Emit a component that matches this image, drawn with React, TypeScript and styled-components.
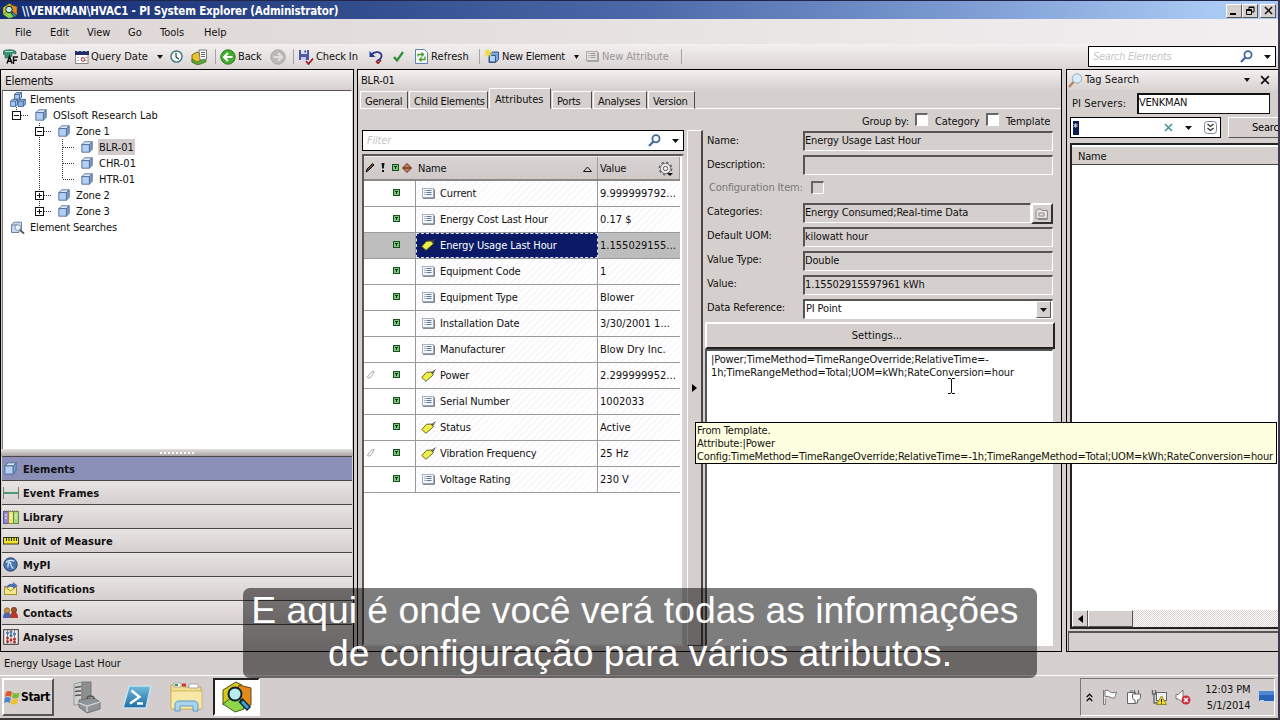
import React from 'react';
import styled, { createGlobalStyle, css } from 'styled-components';

const GlobalStyle = createGlobalStyle`
  html, body { margin: 0; padding: 0; }
  body {
    width: 1280px; height: 720px; overflow: hidden; background: #d4cfcd;
    font-family: "DejaVu Sans Condensed", "DejaVu Sans", sans-serif;
    font-stretch: condensed;
    font-size: 11px; letter-spacing: -0.2px; line-height: 14px; color: #111;
  }
  * { box-sizing: border-box; }
  svg { display: block; flex: none; }
`;

const face = '#d5cfcd';
const raised = css`border: 1px solid; border-color: #fff #5a5555 #5a5555 #fff;`;

/* ---------- window frame ---------- */
const Screen = styled.div`
  position: relative; width: 1280px; height: 720px; overflow: hidden;
  display: flex; flex-direction: column; background: ${face};
  border-right: 2px solid #3d3950; white-space: nowrap;
`;
const TitleBar = styled.header`
  height: 19px; flex: none; display: flex; align-items: center; padding: 1px 0 0 2px; gap: 3px;
  border-top: 1px solid #22254a;
  background: linear-gradient(90deg, #152d74 0%, #2b4687 22%, #4b69a8 50%, #7b9bd2 75%, #a9caf3 95%);
  color: #fff; font-weight: bold;
`;
const TitleText = styled.span`flex: 1; font-size: 11.5px; letter-spacing: -0.17px; padding-left: 1px;`;
const CaptionButton = styled.button<{ $gap?: boolean }>`
  width: 16px; height: 14px; padding: 0; background: ${face}; ${raised}
  display: flex; align-items: center; justify-content: center; margin-left: ${p => (p.$gap ? 2 : 0)}px;
`;
const CaptionButtons = styled.div`display: flex; padding-right: 2px;`;
const MenuBar = styled.nav`
  height: 25px; flex: none; display: flex; align-items: center; padding-left: 15px;
  background: linear-gradient(90deg, #dcd6d4, #ece8e8 70%, #f3eef0);
`;
const MenuItem = styled.span<{ $w: number }>`width: ${p => p.$w}px; padding-top: 2px; letter-spacing: 0;`;
const ToolBar = styled.div`
  height: 25px; flex: none; display: flex; align-items: center; padding-left: 3px;
  background: linear-gradient(#f4f0f0, #ded9d8 85%, #d9d3d2);
`;
const ToolItem = styled.span<{ $w: number; $off?: boolean; $gap?: number; $ls?: number }>`
  width: ${p => p.$w}px; display: flex; align-items: center; gap: ${p => p.$gap ?? 2}px; flex: none;
  color: ${p => (p.$off ? '#9b9696' : '#111')}; letter-spacing: ${p => p.$ls ?? -0.12}px;
`;
const Divider = styled.i`width: 1px; height: 15px; background: #a8a3a3; margin-right: 4px; flex: none;`;
const Grow = styled.span`flex: 1;`;
const Space = styled.span<{ $w: number }>`width: ${p => p.$w}px; flex: none;`;
const SearchInput = styled.div<{ $h: number }>`
  height: ${p => p.$h}px; border: 1px solid #000; background: #fff; display: flex; align-items: center;
  padding: 0 4px; color: #c6c6c6; font-style: italic; flex: none;
`;
const GlobalSearch = styled(SearchInput)`width: 188px; margin-right: 2px; letter-spacing: -0.35px;`;

const Main = styled.main`height: 583px; flex: none; display: flex; gap: 3px;`;
const Pane = styled.section<{ $w: number }>`
  width: ${p => p.$w}px; flex: none; display: flex; flex-direction: column; overflow: hidden;
  border: 1px solid #000; background: ${face};
`;
const PaneTitle = styled.h2`
  margin: 0; height: 20px; flex: none; font: inherit; padding: 4px 0 0 3px; background: linear-gradient(#f4efef, #d5cfcd);
`;

/* ---------- element tree ---------- */
const TreeTitle = styled(PaneTitle)`font-size: 12px; padding-left: 4px; letter-spacing: -0.3px;`;
const Tree = styled.div`
  height: 359px; flex: none; margin: 0 1px; padding: 0 0 0 3px; background: #fefefe;
  border-top: 1px solid #555; border-left: 1px solid #777; border-right: 1px solid #fff;
`;
const TreeRow = styled.div`height: 16px; display: flex; align-items: center;`;
const NodeIcon = styled.span<{ $root?: boolean }>`width: 24px; flex: none; padding-left: ${p => (p.$root ? 4 : 6)}px;`;
const NodeLabel = styled.span<{ $sel?: boolean; $wide?: boolean }>`
  height: 16px; padding: 2px 1px 0; margin-left: -1px; letter-spacing: ${p => (p.$wide ? 0 : -0.15)}px;
  background: ${p => (p.$sel ? '#d1cccb' : 'none')};
`;
const Splitter = styled.div`
  height: 7px; flex: none; display: flex; justify-content: center; align-items: center; gap: 2px;
  background: linear-gradient(#e4e0df, #aaa5a3);
`;
const Grip = styled.i`width: 2px; height: 2px; background: #fff;`;
const NavItem = styled.div<{ $active?: boolean }>`
  height: 24px; flex: none; display: flex; align-items: center; margin: 0 1px; gap: 4px;
  border-top: 1px solid #4a4646; font-weight: bold; letter-spacing: 0.05px;
  background: ${p => (p.$active ? '#8a90b8' : 'linear-gradient(#e9e4e4, #d5cfcf)')};
`;
const NavText = styled.span`padding-top: 2px;`;
const NavIcon = styled.span`width: 17px; display: flex; justify-content: center;`;

/* ---------- attribute pane ---------- */
const Tabs = styled.div`
  height: 19px; flex: none; display: flex; align-items: flex-end; padding-left: 2px; background: ${face};
`;
const Tab = styled.span<{ $w: number; $active?: boolean }>`
  width: ${p => p.$w}px; height: ${p => (p.$active ? 21 : 18)}px; margin-right: 1px; padding-left: 4px; flex: none;
  border: 1px solid; border-color: #fff #4c4848 ${p => (p.$active ? face : '#fff')} #fff;
  background: ${face}; padding-top: ${p => (p.$active ? 4 : 3)}px; letter-spacing: -0.25px;
  ${p => p.$active && css`padding-left: 5px; letter-spacing: -0.05px;`}
`;
const TabsRest = styled.i`flex: 1; height: 1px; background: #fff;`;
const TabPage = styled.div`flex: 1; display: flex; flex-direction: column; padding: 0 7px 5px 4px;`;
const GroupBy = styled.div`height: 20px; flex: none; display: flex; align-items: center; padding-left: 500px;`;
const GroupLabel = styled.span<{ $w: number; $indent?: number }>`
  width: ${p => p.$w}px; padding: 5px 0 0 ${p => p.$indent ?? 0}px; letter-spacing: -0.1px; flex: none;
`;
const Check = styled.i<{ $off?: boolean }>`
  width: 13px; height: 13px; flex: none; background: ${p => (p.$off ? face : '#fff')};
  border: 2px solid; border-width: 2px 1px 1px 2px; border-color: #666 #fff #fff #666;
`;
const Columns = styled.div`flex: 1; display: flex; min-height: 0;`;
const ListColumn = styled.div`width: 322px; flex: none; display: flex; flex-direction: column; gap: 3px; padding-top: 1px;`;
const FilterBox = styled(SearchInput)`width: 322px;`;
const Grid = styled.div`
  flex: 1; background: #fefefe; border: 2px solid; border-color: #5c5858 #d8d4d4 #eee #5c5858; padding-right: 2px;
`;
const rowColumns = css`display: grid; grid-template-columns: 52px 182px 1fr;`;
const GridHead = styled.div`
  ${rowColumns} height: 25px; background: linear-gradient(#d9d3d3, #cfc9c8); border-bottom: 2px solid #8b8786; border-top: 1px solid #eee;
`;
const HeadCell = styled.span`
  display: flex; align-items: center; justify-content: space-between; padding: 1px 5px 0 2px; border-right: 1px solid #a19c9c;
`;
const HeadIcons = styled.span`display: flex; align-items: center; gap: 3px; padding: 0 0 1px 1px;`;
const hatch = 'repeating-linear-gradient(135deg, #fff 0 3px, #faf8fa 3px 5px)';
const GridRow = styled.div<{ $sel?: boolean }>`
  ${rowColumns} height: 26px; border-bottom: 1px solid #9c9999;
  background: ${p => (p.$sel ? '#bebebe' : '#fff')};
`;
const FlagCell = styled.span`display: grid; grid-template-columns: 29px 1fr; align-items: center; padding-bottom: 3px; border-right: 1px solid #999;`;
const NameCell = styled.span<{ $sel?: boolean }>`
  display: flex; align-items: center; padding: 1px 0 0 5px; border-right: 1px solid #999; letter-spacing: -0.12px;
  background: ${p => (p.$sel ? '#0a1a66' : hatch)}; color: ${p => (p.$sel ? '#fff' : '#111')};
  ${p => p.$sel && css`border: 1px dashed #dfe3ff; padding: 0 0 0 4px;`}
`;
const KindIcon = styled.span`width: 19px; flex: none; display: flex; padding-bottom: 2px;`;
const ValueCell = styled.span<{ $sel?: boolean }>`
  padding: 6px 0 0 2px; overflow: hidden; background: ${p => (p.$sel ? '#bdbdbd' : hatch)}; letter-spacing: 0.02px;
`;
const SplitBar = styled.div`
  width: 16px; margin: 1px 0 0 3px; flex: none; display: flex; align-items: center; padding-left: 4px;
  border: 1px solid; border-width: 1px 2px 1px 1px; border-color: #fff #4c4848 #4c4848 #fff; background: ${face};
`;

/* ---------- attribute details ---------- */
const Details = styled.div`width: 350px; margin-left: 2px; flex: none; display: flex; flex-direction: column;`;
const FieldRow = styled.label`
  height: 24px; flex: none; display: grid; grid-template-columns: 96px 1fr; align-items: center; padding-left: 2px;
`;
const OffRow = styled(FieldRow)`grid-template-columns: 102px 1fr; padding: 0 0 3px 4px; color: #777;`;
const FieldName = styled.span<{ $lift?: boolean }>`letter-spacing: -0.12px; padding-bottom: ${p => (p.$lift ? 3 : 0)}px;`;
const FieldBox = styled.span`height: 20px; display: flex; width: 250px;`;
const ReadField = styled.span<{ $edit?: boolean }>`
  flex: 1; border: solid; border-width: 2px 1px 1px 2px; border-color: #555 #fff #fff #555; padding: 1px 0 0;
  background: ${p => (p.$edit ? '#fff' : face)}; display: flex; justify-content: space-between; letter-spacing: -0.15px;
  ${p => p.$edit && css`padding: 0 1px;`}
`;
const ComboText = styled.span`padding: 1px 0 0 0;`;
const SmallButton = styled.button`
  width: 22px; height: 21px; padding: 0; background: ${face}; border: 2px solid; border-color: #fff #333 #333 #fff;
  display: flex; align-items: center; justify-content: center;
`;
const DropButton = styled.span`
  width: 15px; height: 17px; ${raised} background: ${face}; display: flex; align-items: center; justify-content: center;
`;
const SettingsButton = styled.button`
  height: 27px; flex: none; margin-top: 1px; font: inherit; letter-spacing: 0.05px; color: inherit; padding: 1px 6px 0 0;
  background: ${face}; border: 2px solid; border-color: #fff #222 #222 #fff; width: 350px;
`;
const ConfigText = styled.p`
  margin: 0 2px 0 0; flex: 1; padding: 2px 4px; background: #fefefe; line-height: 13px; white-space: pre;
  border: solid; border-width: 2px 1px 1px 2px; border-color: #555 #fff #fff #555; letter-spacing: -0.12px;
`;

/* ---------- tag search ---------- */
const TagHeader = styled.div`height: 20px; flex: none; display: flex; align-items: center; padding: 0 8px 0 1px; letter-spacing: 0.04px; background: linear-gradient(#f4efef, #d9d3d1);`;
const TagPane = styled(Pane)`border-right: 0; margin-left: 1px;`;
const ServerRow = styled.div`height: 27px; flex: none; display: flex; align-items: center; padding-left: 5px;`;
const ServerLabel = styled.span`width: 65px; letter-spacing: 0.1px;`;
const ServerInput = styled.span`width: 133px; height: 21px; border: 1px solid #111; border-width: 2px 1px 1px 2px; background: #fff; padding: 1px 0 0;`;
const TagRow = styled.div`height: 21px; flex: none; display: flex; gap: 7px; padding-left: 3px;`;
const TagInput = styled(SearchInput)`width: 151px; font-style: normal; padding: 0 3px 0 2px; gap: 12px;`;
const Selected = styled.span`background: #0c1c54; color: #fff; width: 6px; height: 14px;`;
const SearchButton = styled.button`
  width: 70px; padding: 0 0 0 23px; text-align: left; font: inherit; letter-spacing: inherit; background: ${face}; ${raised} flex: none;
`;
const TagList = styled.div`
  height: 486px; flex: none; margin: 5px 0 0 3px; display: flex; flex-direction: column; background: #fefefe;
  border: 2px solid #222; border-right: 0;
`;
const TagHead = styled.div`height: 19px; flex: none; margin-top: 1px; padding: 3px 0 0 6px; background: ${face}; border-bottom: 1px solid #444; border-top: 1px solid #fff;`;
const ScrollBar = styled.div`
  height: 17px; flex: none; display: flex; background: repeating-conic-gradient(#fff 0 25%, #d8d2d0 0 50%) 0 0 / 2px 2px;
`;
const ScrollPart = styled.i<{ $w: number }>`
  width: ${p => p.$w}px; ${raised} background: ${face}; display: flex; align-items: center; justify-content: center;
`;
const TagStatus = styled.div`flex: 1; margin: 2px 0 0 1px; border-top: 2px solid #555; border-left: 1px solid #555; background: ${face};`;

/* ---------- bottom bars ---------- */
const StatusBar = styled.footer`height: 24px; flex: none; padding: 5px 0 0 4px; letter-spacing: -0.12px; border-bottom: 1px solid #fff;`;
const TaskBar = styled.div`
  height: 42px; flex: none; display: flex; align-items: center; padding: 0 3px 0 2px; background: #d3cdcd;
`;
const BottomEdge = styled.div`height: 2px; background: #3a3636;`;
const StartButton = styled.button`
  width: 52px; height: 38px; padding: 0; display: flex; align-items: center; font: inherit; font-weight: bold; font-size: 12px;
  letter-spacing: -0.4px; background: ${face}; border: 2px solid; border-color: #fff #555 #555 #fff; flex: none;
`;
const TaskSlot = styled.span<{ $active?: boolean; $w: number }>`
  width: ${p => p.$w}px; height: 38px; flex: none; display: flex; align-items: center; justify-content: center;
  ${p => p.$active && css`background: #fff; border: 2px solid; border-color: #222 #fff #fff #222;`}
`;
const Tray = styled.div`
  width: 195px; height: 38px; border: 1px solid; border-color: #777 #fff #fff #777; display: flex; align-items: center;
  padding: 0 0 0 5px; gap: 8.5px;
`;
const Clock = styled.div`width: 48px; text-align: right; line-height: 16px; margin-left: 3px; letter-spacing: -0.1px; padding-top: 1px;`;

/* ---------- overlays ---------- */
const Tooltip = styled.div`
  position: absolute; left: 695px; top: 422px; width: 582px; height: 42px; padding: 1px; line-height: 13px; white-space: pre;
  background: #fdffe0; border: 1px solid #000; letter-spacing: -0.152px;
`;
const Cursor = styled.span`position: absolute; left: 947px; top: 378px;`;
const Caption = styled.div`
  position: absolute; left: 243px; top: 588px; width: 794px; height: 90px; border-radius: 7px; padding-top: 1px;
  background: rgba(8, 6, 6, 0.52); color: #fff; text-align: center;
  font: 37.3px/43px "Liberation Sans", sans-serif; letter-spacing: 0;
`;

/* ---------- icons ---------- */
const Down = ({ s = 7 }: { s?: number }) => (
  <svg width={s} height={4} viewBox="0 0 8 4" preserveAspectRatio="none"><path d="M0 0h8L4 4z" fill="#111" /></svg>
);
const Magnifier = () => (
  <svg width="13" height="13" viewBox="0 0 13 13" fill="none">
    <circle cx="8" cy="4.8" r="3.6" stroke="#4369a0" strokeWidth="1.8" /><path d="M5.4 7.4 1 12" stroke="#4369a0" strokeWidth="2.2" />
  </svg>
);
const Cube = ({ s = 12 }: { s?: number }) => (
  <svg width={s} height={s} viewBox="0 0 12 12" stroke="#4f6c96" strokeWidth=".9" strokeLinejoin="round">
    <path d="M.8 3.6 3.8.8h7.4L8.4 3.6z" fill="#dce9fa" /><path d="m8.4 3.6 2.8-2.8v7.4l-2.8 3z" fill="#7d9cc9" />
    <rect x=".8" y="3.6" width="7.6" height="7.6" fill="#b4cff4" />
  </svg>
);
const Cubes = () => (
  <svg width="16" height="15" viewBox="0 0 16 15" stroke="#42628f" strokeWidth=".9" strokeLinejoin="round">
    <path d="M4.5 2.5 6.5.6h5v4.6l-2 2h-5z" fill="#a9c8f3" /><path d="M4.5 2.5h5v4.7M9.5 2.5l2-1.9" fill="none" />
    <path d="M.6 9.2 2.5 7.3h5v5L5.6 14.4h-5z" fill="#a9c8f3" /><path d="M.6 9.2h5v5.2M5.6 9.2l1.9-1.9" fill="none" />
    <path d="M8 9.2 10 7.3h5.3v5L13.3 14.4H8z" fill="#8fb3e6" /><path d="M8 9.2h5.3v5.2M13.3 9.2l2-1.9" fill="none" />
  </svg>
);
const SearchCube = () => (
  <svg width="15" height="13" viewBox="0 0 15 13" fill="none">
    <path d="M1.5 4 4 1.2h7.5v8H9v2.3H1.5z" fill="#c9d8ea" stroke="#6b84a4" /><path d="M1.5 4h6" stroke="#6b84a4" /><circle cx="7.8" cy="6.6" r="2.8" fill="#eaf5fb" stroke="#7f9db0" /><path d="m10 9 4 3.6" stroke="#555" strokeWidth="1.8" />
  </svg>
);
const Guide = ({ up, down, arm, box }: { up?: boolean; down?: boolean; arm?: boolean; box?: '+' | '-' }) => (
  <svg width="23" height="16" viewBox="0 0 23 16" shapeRendering="crispEdges" stroke="#333" fill="none">
    <g strokeDasharray="1 1">
      {up && <path d="M10.5 0v8" />}{down && <path d="M10.5 8v8" />}{arm && <path d="M11 8.5h12" />}
    </g>
    {box && <><rect x="6.5" y="4.5" width="8" height="8" fill="#fff" stroke="#111" /><path d={box === '-' ? 'M8 8.5h5' : 'M8 8.5h5M10.5 6v5'} stroke="#111" /></>}
  </svg>
);
const PiLogo = ({ s }: { s: number }) => (
  <svg width={s} height={s} viewBox="0 0 32 32">
    <path d="M2 9 15 1l6 3-9 13-10 7z" fill="#d3c71c" stroke="#554f10" /><path d="m18 4 12 3v17l-9 4-6-12z" fill="#e08a1a" stroke="#6b4210" />
    <path d="m2 23 9-7 10 3 2 9-9 3z" fill="#8fd44b" stroke="#39651c" />
    <circle cx="14" cy="13" r="6.5" fill="#b8ecf0" stroke="#123" strokeWidth="2" /><path d="m19.5 19 8.5 9" stroke="#123" strokeWidth="5.5" /><path d="m21 20.5 6 6.5" stroke="#35a5d8" strokeWidth="3" />
  </svg>
);
const Doc = ({ off }: { off?: boolean }) => (
  <svg width="13" height="11" viewBox="0 0 13 11">
    <rect x=".5" y=".5" width="11" height="9" fill={off ? '#e4e0e0' : '#f3f7fc'} stroke={off ? '#b0abab' : '#a9b3c0'} />
    <path d="M1 10.3h11.4V1.5" fill="none" stroke={off ? '#999' : '#66707e'} />
    <path d="M2.5 2.5h1M4.5 2.5h5M2.5 4.5h1M4.5 4.5h5M2.5 6.5h1M4.5 6.5h5" stroke={off ? '#999' : '#5f7697'} />
  </svg>
);
const TagIcon = () => (
  <svg width="15" height="13" viewBox="0 0 15 13">
    <path d="M.8 8.5 5.5 3.3l5.500-.3 1.4 2.8-7.400 6.500z" fill="#eeee48" stroke="#5e5c12" strokeWidth=".9" /><path d="m10 4 4.500-3.300M11 5l2.600-2.400" stroke="#444" fill="none" />
  </svg>
);
const Template = () => (
  <svg width="7" height="7" viewBox="0 0 7 7" shapeRendering="crispEdges"><rect x=".5" y=".5" width="6" height="6" fill="#7cc47e" stroke="#17521d" /><path d="M2 2.500h3M3.500 2.500V5" stroke="#103512" /></svg>
);
const Clip = () => (
  <svg width="11" height="9" viewBox="0 0 11 9" fill="none" stroke="#aaa"><path d="M3 7.500 7 2.500l3-1.500-1 3-3 4-2.500-.3" /></svg>
);
const Pencil = () => (
  <svg width="10" height="11" viewBox="0 0 10 11"><path d="M1 10 2 7 7.500 1.500l1.500 1.500L3.500 8.500z" fill="#6b4a3a" stroke="#111" /></svg>
);
const Bang = () => (
  <svg width="8" height="11" viewBox="0 0 8 11"><path d="M3.500 1h3l-.7 5.500H4.200zM4 8h2v2H4z" fill="#111" /></svg>
);
const Diamond = () => (
  <svg width="10" height="10" viewBox="0 0 10 10"><path d="m5 .5 4.500 4.500L5 9.500.5 5z" fill="#c87a55" stroke="#6b2c18" /><path d="M1 5h8" stroke="#4d1e12" /></svg>
);
const Gear = () => (
  <svg width="16" height="16" viewBox="0 0 16 16" fill="none" stroke="#555">
    <circle cx="7.500" cy="7.500" r="6" stroke="#666" strokeDasharray="2.400 2.300" strokeWidth="1.800" /><circle cx="7.500" cy="7.500" r="5" fill="#f4f2f2" stroke="#777" /><circle cx="7.500" cy="7.500" r="2.200" /><path d="M9 12h6l-3 3z" fill="#111" stroke="none" />
  </svg>
);
const DatabaseIcon = () => (
  <svg width="15" height="15" viewBox="0 0 15 15">
    <path d="M0 3c0-3 13-3 13 0v2L9 4v3L6 9H2V6L0 5z" fill="#3a9277" stroke="#24614e" strokeWidth=".6" /><path d="M2 2.500h8" stroke="#a8ddc8" />
    <path d="m4 14.500 2.500-7L9 14.500M5 12.300h3M10.500 15V8H15M10.500 11.300h3.500" fill="none" stroke="#111" strokeWidth="1.500" />
  </svg>
);
const CalendarIcon = () => (
  <svg width="14" height="14" viewBox="0 0 14 14">
    <rect x=".5" y="1.500" width="12.500" height="12" fill="#fff" stroke="#888" /><path d="M0 1h14v4H0z" fill="#222b66" /><path d="M3 0v2M7 0v2M11 0v2" stroke="#eee" />
    <path d="M2 7.500h2M6 7.500h2M10 7.500h2M2 10.500h2M10 10.500h2" stroke="#aaa" /><circle cx="8" cy="9.500" r="1.800" fill="none" stroke="#b2252c" />
  </svg>
);
const ClockIcon = () => (
  <svg width="13" height="13" viewBox="0 0 14 14"><circle cx="7" cy="7" r="6" fill="#f2faf8" stroke="#3d7476" strokeWidth="1.500" /><path d="M6.500 3v4.500L9.500 10" fill="none" stroke="#333" strokeWidth="1.200" /></svg>
);
const BoxPage = () => (
  <svg width="17" height="16" viewBox="0 0 17 16">
    <path d="m1 6 5-3 5 3v7l-5 2.500-5-2.500z" fill="#e8c22c" stroke="#7a6a14" /><path d="m1 10 5 3 9-4v4l-8 3-6-3z" fill="#57a83a" stroke="#35661f" strokeWidth=".6" />
    <path d="M8 1h7.500v9L9 11z" fill="#fff" stroke="#777" /><path d="M10 3.500h4M10 5.500h4M10 7.500h4" stroke="#668" />
  </svg>
);
const ArrowBall = ({ off }: { off?: boolean }) => (
  <svg width="16" height="16" viewBox="0 0 16 16">
    <circle cx="8" cy="8" r="7.200" fill={off ? '#bdb9b8' : '#43ac2c'} stroke={off ? '#a9a5a4' : '#2d7a1e'} />
    <path d={off ? 'M3.500 8h8M8 4l4 4-4 4' : 'M12.500 8h-8M8 4 4 8l4 4'} fill="none" stroke={off ? '#e2dfde' : '#fff'} strokeWidth="2.200" />
  </svg>
);
const CheckInIcon = () => (
  <svg width="16" height="16" viewBox="0 0 16 16">
    <path d="M1 1h10v10H1z" fill="#5057a6" /><path d="M3 1h6v4H3z" fill="#dfe2f5" /><path d="M3 8h5v3H3z" fill="#c4c9ea" /><path d="M6.500 1.500h1.500v2H6.500z" fill="#333a77" /><path d="m8 12 2.500 3L15 9.500" fill="none" stroke="#a01c28" strokeWidth="1.800" />
  </svg>
);
const UndoIcon = () => (
  <svg width="14" height="14" viewBox="0 0 14 14" fill="none"><path d="M2 5c4-5 11-3 10.500 1.500C12.300 9 10 10 8 11" stroke="#26378f" strokeWidth="1.700" /><path d="M.5 1v6h6z" fill="#26378f" /><path d="m7 11 2 2.500 3-3.500" stroke="#a32020" strokeWidth="1.600" /></svg>
);
const TickIcon = () => (
  <svg width="11" height="11" viewBox="0 0 11 11"><path d="m1 6 3 3.500L10 1" fill="none" stroke="#2c8f35" strokeWidth="2.200" /></svg>
);
const RefreshIcon = () => (
  <svg width="13" height="15" viewBox="0 0 13 15"><path d="M.5.5h9l3 3v11H.5z" fill="#f5f9ff" stroke="#6080ad" /><path d="M3 7.500V5.500h5M6.500 3.500l2 2-2 2M10 7.500v3H5M6.500 8.500l-2 2 2 2" fill="none" stroke="#4a9e26" strokeWidth="1.300" /></svg>
);
const NewElementIcon = () => (
  <svg width="16" height="15" viewBox="0 0 16 15"><path d="m5 6 3-3h6.500v7.500l-3 3H5z" fill="#7ba6e0" stroke="#35588c" /><path d="M5.500 6.500h6v6.500h-6z" fill="#b5d1f7" stroke="#35588c" /><path d="M4 0v8M0 4h8M1 1l6 6M7 1 1 7" stroke="#eed83a" strokeWidth="1.200" /></svg>
);
const TagSearchIcon = () => (
  <svg width="15" height="15" viewBox="0 0 15 15"><circle cx="9" cy="5.500" r="4.700" fill="#d6ecfa" stroke="#92aac4" /><path d="m5.500 9-4.500 5" stroke="#b5805f" strokeWidth="2.200" /></svg>
);
const CrossIcon = ({ s = 9, c = '#111' }: { s?: number; c?: string }) => (
  <svg width={s} height={s} viewBox="0 0 9 9"><path d="m1 1 7 7M8 1 1 8" stroke={c} strokeWidth="1.500" /></svg>
);
const Expand = () => (
  <svg width="13" height="13" viewBox="0 0 13 13" fill="none"><rect x=".5" y=".5" width="12" height="12" rx="3" stroke="#7d86a0" /><path d="m3.500 3 3 2.500 3-2.500M3.500 7l3 2.500 3-2.500" stroke="#333" strokeWidth="1.300" /></svg>
);
const FolderIcon = () => (
  <svg width="14" height="12" viewBox="0 0 14 12" fill="none" stroke="#8f8a8a"><path d="M1 10.500v-8l2-1.500h3l1 1.500h5.500v8z" fill="#e6e2e0" /><path d="M4 5h5v3H4zM12.500 11.500H3" /></svg>
);
const FrameIcon = () => (
  <svg width="16" height="12" viewBox="0 0 16 12"><path d="M.5 0v12M15.500 0v12" stroke="#6d7f78" /><path d="M1 6h14" stroke="#4c9a72" strokeWidth="2" /></svg>
);
const BooksIcon = () => (
  <svg width="16" height="14" viewBox="0 0 16 14"><rect x=".5" y="1.500" width="5" height="12" fill="#9287cc" stroke="#62589a" /><rect x="5.500" y="1.500" width="5" height="12" fill="#f0e37b" stroke="#96883d" /><rect x="10.500" y="1.500" width="5" height="12" fill="#a6d97b" stroke="#5f9140" /><path d="M1 1h14" stroke="#777" strokeDasharray="1 1" /><path d="M2 5h2M7 5h2M12 5h2M2 8h2M7 8h2M12 8h2" stroke="#fff" /></svg>
);
const RulerIcon = () => (
  <svg width="16" height="8" viewBox="0 0 16 8"><rect x=".5" y=".5" width="15" height="6.500" fill="#f2e42c" stroke="#3b3710" /><path d="M3.500 1v3M6 1v3M8.500 1v3M11 1v3M13.500 1v3" stroke="#222" /></svg>
);
const GlobeIcon = () => (
  <svg width="15" height="15" viewBox="0 0 15 15"><circle cx="7.500" cy="7.500" r="6.700" fill="#4a74ad" stroke="#27496f" /><path d="M3 5.500c2-2.500 5-2.500 8.500-1.500M6.500 4.500c-1.500 2-2 3.500-1.500 6M7.500 5c0 3 .5 5 3 6.500" fill="none" stroke="#dceafa" strokeWidth="1.300" /></svg>
);
const MailIcon = () => (
  <svg width="14" height="13" viewBox="0 0 14 13"><rect x=".5" y="4.500" width="12" height="8" fill="#f6e98c" stroke="#a08d34" /><path d="m1 5 5.500 4L12 5" fill="none" stroke="#a08d34" /><path d="M3 4c2-2 4-2.500 6-2V0l4.500 3.500L9 7V5C7 4.500 5 5 3 6z" fill="#4c6fb8" /></svg>
);
const PeopleIcon = () => (
  <svg width="15" height="12" viewBox="0 0 15 12"><path d="M0 11c0-5 2-6 4-6s4 1 4 6z" fill="#4b67b5" /><circle cx="4" cy="3.500" r="2.700" fill="#c99245" stroke="#6b4b1c" strokeWidth=".6" /><path d="M7 11c0-5 2-6 4-6s4 1 4 6z" fill="#b8382c" /><circle cx="11" cy="3" r="2.700" fill="#a3502c" stroke="#5c2812" strokeWidth=".6" /></svg>
);
const AbacusIcon = () => (
  <svg width="16" height="16" viewBox="0 0 16 16"><rect x=".7" y=".7" width="14.600" height="14.600" fill="#f2eeee" stroke="#333" /><path d="M4.500 1v14M8 1v14M11.500 1v14" stroke="#888" /><g fill="#4a74ad"><circle cx="4.500" cy="4" r="1.500" /><circle cx="8" cy="3" r="1.500" /><circle cx="11.500" cy="5" r="1.500" /><circle cx="8" cy="6.500" r="1.500" /></g><g fill="#b5302c"><circle cx="4.500" cy="9" r="1.500" /><circle cx="4.500" cy="12.500" r="1.500" /><circle cx="8" cy="11" r="1.500" /><circle cx="11.500" cy="10" r="1.500" /><circle cx="11.500" cy="13" r="1.500" /></g></svg>
);
const WindowsFlag = () => (
  <svg width="17" height="17" viewBox="0 0 17 17"><path d="M2 3c2-1.500 4-1.500 6 0L7 8C5 6.500 3 6.500 1 8z" fill="#dd5a2b" /><path d="M9 3.500c2 1.300 4 1.300 6.500 0L14.500 8.500c-2 1.300-4.500 1.300-6.500 0z" fill="#7dba3c" /><path d="M.8 9c2-1.500 4-1.500 6 0l-1 5C4 12.500 2 12.500 0 14z" fill="#4b86cf" /><path d="M7.800 9.500c2 1.300 4 1.300 6.400 0l-1 5c-2 1.300-4.400 1.300-6.400 0z" fill="#f0bf33" /></svg>
);
const ServerIcon = () => (
  <svg width="30" height="33" viewBox="0 0 30 33"><path d="M2 3 10 1v22l-8 1z" fill="#d2d2d2" stroke="#999" /><path d="M10 1h9v22h-9z" fill="#8d8f90" stroke="#777" /><path d="M3 6.500 9 5.500M3 10.500l6-.8M3 14.500l6-.5" stroke="#555" strokeWidth="1.500" /><path d="m7 19 15-2 6 4v7l-13 4-8-6z" fill="#8e9497" stroke="#6f7477" /><path d="m7 22 8 3 13-4M15 25v6" fill="none" stroke="#d9dcdd" strokeWidth="1.300" /><path d="M15 18c0-4 7-4 7 0" fill="none" stroke="#555" strokeWidth="1.500" /></svg>
);
const ShellIcon = () => (
  <svg width="30" height="25" viewBox="0 0 30 25"><defs><linearGradient id="shell" x1="0" y1="0" x2="0" y2="1"><stop stopColor="#71bbdc" /><stop offset="1" stopColor="#1f6ca3" /></linearGradient></defs><path d="M7 1h22l-5 22H1z" fill="url(#shell)" stroke="#c7e2ef" strokeWidth="1.500" strokeLinejoin="round" /><path d="m9.500 5.500 8 6.500-9.500 6.500M15 18.500h6" fill="none" stroke="#fff" strokeWidth="2.400" /></svg>
);
const ExplorerIcon = () => (
  <svg width="33" height="32" viewBox="0 0 33 32"><path d="M1 4h10l2 2h18v22H1z" fill="#f3dc8c" stroke="#c6a851" /><path d="M4 2h7v4H4zM19 3h9v4h-9z" fill="#fff" stroke="#aaa" /><path d="M12 4h4" stroke="#cc3b2b" strokeWidth="3" /><path d="M5 4h3" stroke="#3c9c43" strokeWidth="2" /><path d="M1 10h31v18H1z" fill="#f8e8a8" stroke="#d4b862" /><path d="M5 30v-6c0-3 2-4 4-4h15c2 0 4 1 4 4v6h-5v-5H10v5z" fill="#a9d4ee" stroke="#5a9bc4" /></svg>
);
const ChevronsUp = () => (
  <svg width="7" height="9" viewBox="0 0 7 9" fill="none" stroke="#111" strokeWidth="1.400"><path d="m.7 4 2.800-2.800L6.300 4M.7 8l2.800-2.800L6.300 8" /></svg>
);
const FlagIcon = () => (
  <svg width="16" height="16" viewBox="0 0 16 16" fill="#fbfbfb" stroke="#777"><path d="M1.500 1v14.500h1.800V9.500" /><path d="M3 1.500c3-1 4 .5 5 1.500 2 1 4 1 6.500 0-1 3-1 4-2 6-3 .5-4-1-6-1.500-1-.3-2-.2-3.500.3z" /></svg>
);
const PlugIcon = () => (
  <svg width="16" height="16" viewBox="0 0 16 16" fill="#fbfbfb" stroke="#666"><path d="M1.500 3.500h8v11h-8z" /><path d="M4 2h3M8.500 1v4M12.500 1v4M6.500 5h8v3c0 2-1.500 3-3 3v3H9v-3c-1.500 0-2.500-1-2.500-3z" /></svg>
);
const NetIcon = () => (
  <svg width="16" height="16" viewBox="0 0 16 16" stroke="#666"><rect x="5.500" y="3.500" width="10" height="8" fill="#e9eef3" /><path d="M1.500 1v4h3V1M3 5v9h5" fill="none" strokeWidth="1.300" /><path d="m10.500 7 5 8.500h-10z" fill="#f0dc25" stroke="#99861a" /><path d="M10.500 10v3M10.500 13.800v1" stroke="#111" /></svg>
);
const SoundOff = () => (
  <svg width="16" height="16" viewBox="0 0 16 16"><path d="M1 5.500h2.500L8 1v13l-4.500-4H1z" fill="#fbfbfb" stroke="#777" /><circle cx="11" cy="11" r="4.500" fill="#c9303c" /><path d="m9 9 4 4m0-4-4 4" stroke="#fff" strokeWidth="1.500" /></svg>
);
const DesktopIcon = () => (
  <svg width="15" height="12" viewBox="0 0 15 12"><path d="M0 0h15v10H0z" fill="#2c62b8" /><path d="M0 0h15v4H0z" fill="#4f87d4" /><path d="M0 11h14M1 9.500h4" stroke="#c2d6ea" /></svg>
);

/* ---------- data ---------- */
type Attribute = { name: string; value: string; tag?: boolean; clip?: boolean; sel?: boolean };
const attributes: Attribute[] = [
  { name: 'Current', value: '9.999999792...' },
  { name: 'Energy Cost Last Hour', value: '0.17 $' },
  { name: 'Energy Usage Last Hour', value: '1.155029155...', tag: true, sel: true },
  { name: 'Equipment Code', value: '1' },
  { name: 'Equipment Type', value: 'Blower' },
  { name: 'Installation Date', value: '3/30/2001 1...' },
  { name: 'Manufacturer', value: 'Blow Dry Inc.' },
  { name: 'Power', value: '2.299999952...', tag: true, clip: true },
  { name: 'Serial Number', value: '1002033' },
  { name: 'Status', value: 'Active', tag: true },
  { name: 'Vibration Frequency', value: '25 Hz', tag: true, clip: true },
  { name: 'Voltage Rating', value: '230 V' },
];
const navigation: [string, React.ReactNode][] = [
  ['Elements', <Cube s={13} />], ['Event Frames', <FrameIcon />], ['Library', <BooksIcon />], ['Unit of Measure', <RulerIcon />],
  ['MyPI', <GlobeIcon />], ['Notifications', <MailIcon />], ['Contacts', <PeopleIcon />], ['Analyses', <AbacusIcon />],
];
const menus: [string, number][] = [['File', 35], ['Edit', 37], ['View', 41], ['Go', 32], ['Tools', 44], ['Help', 40]];
const tabs: [string, number][] = [['General', 48], ['Child Elements', 79], ['Attributes', 62], ['Ports', 40], ['Analyses', 54], ['Version', 47]];

const ElementTree = () => (
  <Tree>
    <TreeRow><NodeIcon $root><Cubes /></NodeIcon><NodeLabel>Elements</NodeLabel></TreeRow>
    <TreeRow><Guide up arm box="-" /><NodeIcon><Cube /></NodeIcon><NodeLabel $wide>OSIsoft Research Lab</NodeLabel></TreeRow>
    <TreeRow><Guide /><Guide up down arm box="-" /><NodeIcon><Cube /></NodeIcon><NodeLabel>Zone 1</NodeLabel></TreeRow>
    {['BLR-01', 'CHR-01', 'HTR-01'].map((n, i) => (
      <TreeRow key={n}><Guide /><Guide up down /><Guide up down={i < 2} arm /><NodeIcon><Cube /></NodeIcon><NodeLabel $wide $sel={i === 0}>{n}</NodeLabel></TreeRow>
    ))}
    <TreeRow><Guide /><Guide up down arm box="+" /><NodeIcon><Cube /></NodeIcon><NodeLabel>Zone 2</NodeLabel></TreeRow>
    <TreeRow><Guide /><Guide up arm box="+" /><NodeIcon><Cube /></NodeIcon><NodeLabel>Zone 3</NodeLabel></TreeRow>
    <TreeRow><NodeIcon $root><SearchCube /></NodeIcon><NodeLabel>Element Searches</NodeLabel></TreeRow>
  </Tree>
);

const Field = ({ label, value, lift, children }: { label: string; value: string; lift?: boolean; children?: React.ReactNode }) => (
  <FieldRow><FieldName $lift={lift}>{label}</FieldName><FieldBox><ReadField>{value}</ReadField>{children}</FieldBox></FieldRow>
);

export default function App() {
  return (
    <Screen>
      <GlobalStyle />
      <TitleBar>
        <PiLogo s={16} />
        <TitleText>\\VENKMAN\HVAC1 - PI System Explorer (Administrator)</TitleText>
        <CaptionButtons>
          <CaptionButton><svg width="8" height="8"><path d="M0 7h6" stroke="#000" strokeWidth="2" /></svg></CaptionButton>
          <CaptionButton><svg width="9" height="9" fill="none" stroke="#000"><path d="M3 3V1h5v5H6M3 1.500h5M.5 3.500h5v5h-5zM.5 4.500h5" /></svg></CaptionButton>
          <CaptionButton $gap><CrossIcon /></CaptionButton>
        </CaptionButtons>
      </TitleBar>
      <MenuBar>{menus.map(([m, w]) => <MenuItem key={m} $w={w}>{m}</MenuItem>)}</MenuBar>
      <ToolBar>
        <ToolItem $w={72}><DatabaseIcon />Database</ToolItem>
        <ToolItem $w={82} $ls={0}><CalendarIcon />Query Date</ToolItem>
        <ToolItem $w={13}><Down s={6} /></ToolItem>
        <ToolItem $w={21}><ClockIcon /></ToolItem>
        <ToolItem $w={24}><BoxPage /></ToolItem>
        <Divider />
        <ToolItem $w={50}><ArrowBall />Back</ToolItem>
        <ToolItem $w={23}><ArrowBall off /></ToolItem>
        <Divider />
        <ToolItem $w={71}><CheckInIcon />Check In</ToolItem>
        <ToolItem $w={24}><UndoIcon /></ToolItem>
        <ToolItem $w={22}><TickIcon /></ToolItem>
        <ToolItem $w={64} $gap={3} $ls={0.1}><RefreshIcon />Refresh</ToolItem>
        <Divider />
        <ToolItem $w={90} $ls={-0.25}><NewElementIcon />New Element</ToolItem>
        <ToolItem $w={12}><Down s={5} /></ToolItem>
        <ToolItem $w={95} $off $gap={3}><Doc off />New Attribute</ToolItem>
        <Divider />
        <Grow />
        <GlobalSearch $h={21}>Search Elements<Grow /><Magnifier /><Space $w={11} /><Down /></GlobalSearch>
      </ToolBar>

      <Main>
        <Pane $w={354}>
          <TreeTitle>Elements</TreeTitle>
          <ElementTree />
          <Splitter>{Array.from({ length: 9 }, (_, i) => <Grip key={i} />)}</Splitter>
          {navigation.map(([n, icon], i) => <NavItem key={n} $active={i === 0}><NavIcon>{icon}</NavIcon><NavText>{n}</NavText></NavItem>)}
        </Pane>

        <Pane $w={705}>
          <PaneTitle>BLR-01</PaneTitle>
          <Tabs>{tabs.map(([t, w]) => <Tab key={t} $w={w} $active={t === 'Attributes'}>{t}</Tab>)}<TabsRest /></Tabs>
          <TabPage>
            <GroupBy>
              <GroupLabel $w={53}>Group by:</GroupLabel><Check />
              <GroupLabel $w={58} $indent={7}>Category</GroupLabel><Check />
              <GroupLabel $w={60} $indent={7}>Template</GroupLabel>
            </GroupBy>
            <Columns>
              <ListColumn>
                <FilterBox $h={21}>Filter<Grow /><Magnifier /><Space $w={11} /><Down /></FilterBox>
                <Grid>
                  <GridHead>
                    <HeadIcons><Pencil /><Bang /><span /><Template /><Diamond /></HeadIcons>
                    <HeadCell>Name<svg width="9" height="6" fill="none" stroke="#111"><path d="M.5 5.500h8L4.500 1z" /></svg></HeadCell>
                    <HeadCell>Value<Gear /></HeadCell>
                  </GridHead>
                  {attributes.map(a => (
                    <GridRow key={a.name} $sel={a.sel}>
                      <FlagCell><span>{a.clip && <Clip />}</span><Template /></FlagCell>
                      <NameCell $sel={a.sel}><KindIcon>{a.tag ? <TagIcon /> : <><Space $w={1} /><Doc /></>}</KindIcon>{a.name}</NameCell>
                      <ValueCell $sel={a.sel}>{a.value}</ValueCell>
                    </GridRow>
                  ))}
                </Grid>
              </ListColumn>
              <SplitBar><svg width="5" height="8"><path d="M0 0v8l5-4z" /></svg></SplitBar>
              <Details>
                <Field label="Name:" value="Energy Usage Last Hour" />
                <Field label="Description:" value="" />
                <OffRow><FieldName>Configuration Item:</FieldName><Check $off /></OffRow>
                <Field lift label="Categories:" value="Energy Consumed;Real-time Data"><SmallButton><FolderIcon /></SmallButton></Field>
                <Field lift label="Default UOM:" value="kilowatt hour" />
                <Field lift label="Value Type:" value="Double" />
                <Field lift label="Value:" value="1.15502915597961 kWh" />
                <FieldRow><FieldName $lift>Data Reference:</FieldName><FieldBox><ReadField $edit><ComboText>PI Point</ComboText><DropButton><Down /></DropButton></ReadField></FieldBox></FieldRow>
                <SettingsButton>Settings...</SettingsButton>
                <ConfigText>{'|Power;TimeMethod=TimeRangeOverride;RelativeTime=-\n1h;TimeRangeMethod=Total;UOM=kWh;RateConversion=hour'}</ConfigText>
              </Details>
            </Columns>
          </TabPage>
        </Pane>

        <TagPane $w={212}>
          <TagHeader><TagSearchIcon /><Space $w={2} />Tag Search<Grow /><Down s={6} /><Space $w={10} /><CrossIcon s={10} /></TagHeader>
          <ServerRow><ServerLabel>PI Servers:</ServerLabel><ServerInput>VENKMAN</ServerInput></ServerRow>
          <TagRow>
            <TagInput $h={21}><Selected>*</Selected><Grow /><CrossIcon s={9} c="#3f8f96" /><Down /><Expand /></TagInput>
            <SearchButton>Search</SearchButton>
          </TagRow>
          <TagList>
            <TagHead>Name</TagHead>
            <Grow />
            <ScrollBar>
              <ScrollPart $w={16}><svg width="5" height="8"><path d="M5 0v8L0 4z" /></svg></ScrollPart>
              <ScrollPart $w={45} />
            </ScrollBar>
          </TagList>
          <TagStatus />
        </TagPane>
      </Main>

      <StatusBar>Energy Usage Last Hour</StatusBar>
      <TaskBar>
        <StartButton><WindowsFlag />Start</StartButton>
        <Space $w={18} />
        <TaskSlot $w={30}><ServerIcon /></TaskSlot>
        <Space $w={20} />
        <TaskSlot $w={30}><ShellIcon /></TaskSlot>
        <Space $w={18} />
        <TaskSlot $w={33}><ExplorerIcon /></TaskSlot>
        <Space $w={10} />
        <TaskSlot $w={47} $active><PiLogo s={32} /></TaskSlot>
        <Grow />
        <Tray><ChevronsUp /><FlagIcon /><PlugIcon /><NetIcon /><SoundOff /><Clock>12:03 PM<br />5/1/2014</Clock><DesktopIcon /></Tray>
      </TaskBar>
      <BottomEdge />

      <Cursor><svg width="9" height="16" fill="none" stroke="#111"><path d="M1 .5h3M5 .5h3M4.500 1v14M1 15.500h3M5 15.500h3" /></svg></Cursor>
      <Tooltip>{'From Template.\nAttribute:|Power\nConfig:TimeMethod=TimeRangeOverride;RelativeTime=-1h;TimeRangeMethod=Total;UOM=kWh;RateConversion=hour'}</Tooltip>
      <Caption>E aqui é onde você verá todas as informações&nbsp;<br />de configuração para vários atributos.</Caption>
    </Screen>
  );
}
